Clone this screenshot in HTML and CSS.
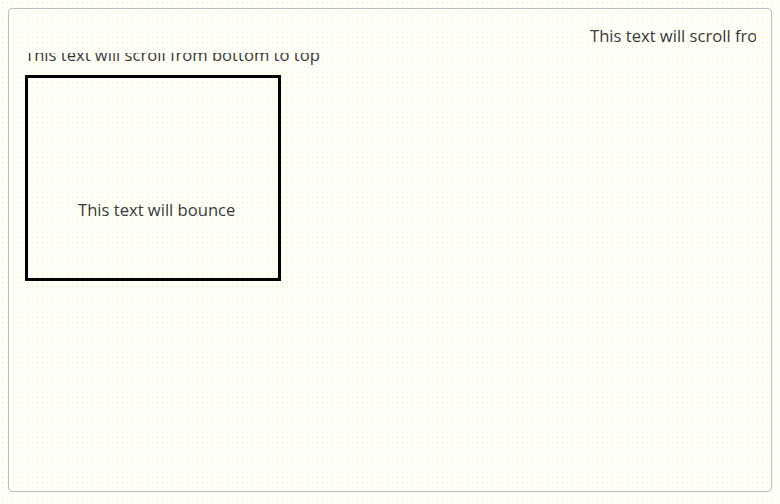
FILE: index.html
```html
<!DOCTYPE html>
<html lang="en">
<head>
    <meta charset="UTF-8">
    <title>Marquee demo</title>
    <link rel="stylesheet" href="styles.css">
</head>
<body>
    <div class="frame">
        <div class="marquee-row">
            <span class="scroll-left">This text will scroll from right to left</span>
        </div>
        <div class="marquee-up">
            <span class="scroll-up">This text will scroll from bottom to top</span>
        </div>
        <div class="bounce-box">
            <span class="bounce-text">This text will bounce</span>
        </div>
    </div>
</body>
</html>
```

FILE: styles.css
```css
body {
    margin: 8px;
    font-family: "Open Sans", Lato, sans-serif;
    font-size: 16.6px;
    color: #383838;
    background-color: #fffffa;
    background-image: radial-gradient(circle, #fbf0a0 0.6px, transparent 0.9px);
    background-size: 5px 5px;
}

.frame {
    box-sizing: border-box;
    height: 484px;
    border: 1px solid #bdbdbd;
    border-radius: 4px;
    padding: 16px 15px 0 16px;
}

.marquee-row {
    height: 28px;
    line-height: 22px;
    overflow: hidden;
    white-space: nowrap;
}
.scroll-left {
    display: inline-block;
    margin-left: 565px;
}

.marquee-up {
    height: 22px;
    line-height: 22px;
    overflow: hidden;
    white-space: nowrap;
}
.scroll-up {
    display: block;
    margin-top: -9px;
}

.bounce-box {
    width: 250px;
    height: 200px;
    border: 3px solid #000;
}
.bounce-text {
    display: inline-block;
    margin: 121px 0 0 50px;
    line-height: 22px;
}
```
